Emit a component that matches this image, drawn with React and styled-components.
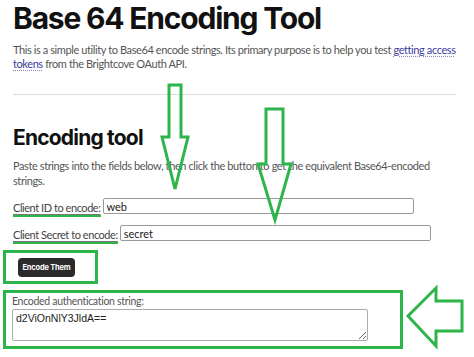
import React, { useState } from 'react';
import styled, { createGlobalStyle } from 'styled-components';

const GlobalStyle = createGlobalStyle`
	body {
		margin: 0;
		background: #fff;
		font-family: "Lato", "Liberation Sans", sans-serif;
	}
`;

const Page = styled.div`
	position: relative;
	width: 474px;
	height: 357px;
	overflow: hidden;
	padding: 0 18px 0 13px;
	box-sizing: border-box;
`;
const Title = styled.h1`
	margin: 0;
	padding-top: 1px;
	font-family: "Inter", "Liberation Sans", sans-serif;
	font-size: 30px;
	line-height: 34px;
	font-weight: 700;
	color: #111;
	letter-spacing: -1.2px;
`;
const Intro = styled.p`
	margin: 8px 0 0;
	font-size: 11px;
	line-height: 14px;
	letter-spacing: -0.4px;
	color: #555;
`;
const Link = styled.a`
	color: #3b3b9c;
	text-decoration: underline dotted #8888bb;
	text-underline-offset: 2px;
`;
const Rule = styled.hr`
	margin: 23px 0 0;
	border: none;
	border-top: 1px solid #ddd;
`;
const Heading = styled.h2`
	margin: 31px 0 0;
	font-family: "Inter", "Liberation Sans", sans-serif;
	font-size: 21px;
	line-height: 24px;
	font-weight: 700;
	color: #111;
	letter-spacing: -0.8px;
`;
const Hint = styled.p`
	margin: 8px 0 0;
	font-size: 11px;
	line-height: 15px;
	letter-spacing: -0.4px;
	color: #555;
`;
const Field = styled.div`
	display: flex;
	align-items: center;
	height: 16px;
	margin-top: ${p => p.$top}px;
`;
const Label = styled.label`
	font-size: 11px;
	line-height: 13px;
	letter-spacing: -0.45px;
	color: #444;
	text-decoration: underline;
	text-decoration-color: #777;
	text-underline-offset: 2px;
	border-bottom: 2px solid #2db54a;
	padding-bottom: 1px;
	margin-top: 5px;
`;
const TextInput = styled.input`
	width: 311px;
	height: 16px;
	box-sizing: border-box;
	margin-left: 2px;
	border: 1px solid #999;
	border-radius: 2px;
	padding: 0 3px;
	font: 11px "Lato", "Liberation Sans", sans-serif;
	color: #222;
`;
const ButtonBox = styled.div`
	margin: 9px 0 0 -10px;
	width: 95px;
	height: 34px;
	box-sizing: border-box;
	border: 3px solid #2db54a;
	padding: 5px 0 0 12px;
`;
const EncodeButton = styled.button`
	display: block;
	width: 57px;
	height: 19px;
	background: #2b2b2b;
	color: #fff;
	border: none;
	border-radius: 4px;
	font: 700 7.5px "Inter", "Liberation Sans", sans-serif;
	letter-spacing: -0.2px;
	padding: 0;
`;
const ResultBox = styled.div`
	margin: 6px 0 0 -10px;
	width: 400px;
	height: 59px;
	box-sizing: border-box;
	border: 3px solid #2db54a;
	padding: 2px 0 0 6px;
`;
const ResultLabel = styled.div`
	font-size: 10.5px;
	line-height: 12px;
	letter-spacing: -0.3px;
	color: #555;
`;
const ResultArea = styled.textarea`
	display: block;
	margin-top: 2px;
	width: 356px;
	height: 32px;
	box-sizing: border-box;
	border: 1px solid #aaa;
	border-radius: 2px;
	padding: 2px 3px;
	font: 10.5px "Liberation Sans", sans-serif;
	color: #222;
	resize: vertical;
`;
const Overlay = styled.svg`
	position: absolute;
	left: 0;
	top: 0;
	pointer-events: none;
`;

function App() {
	const [clientId, setClientId] = useState('web');
	const [secret, setSecret] = useState('secret');
	const [encoded, setEncoded] = useState('d2ViOnNlY3JldA==');

	const handleEncode = () => {
		setEncoded(btoa(clientId + ':' + secret));
	}

	return (
		<Page>
			<GlobalStyle />
			<Title>Base 64 Encoding Tool</Title>
			<Intro>
				This is a simple utility to Base64 encode strings. Its primary purpose is to help you test <Link href="#">getting access tokens</Link> from the Brightcove OAuth API.
			</Intro>
			<Rule />
			<Heading>Encoding tool</Heading>
			<Hint>Paste strings into the fields below, then click the button to get the equivalent Base64-encoded strings.</Hint>
			<Field $top={10}>
				<Label>Client ID to encode:</Label>
				<TextInput value={clientId} onChange={e => setClientId(e.target.value)} />
			</Field>
			<Field $top={11}>
				<Label>Client Secret to encode:</Label>
				<TextInput value={secret} onChange={e => setSecret(e.target.value)} />
			</Field>
			<ButtonBox>
				<EncodeButton onClick={handleEncode}>Encode Them</EncodeButton>
			</ButtonBox>
			<ResultBox>
				<ResultLabel>Encoded authentication string:</ResultLabel>
				<ResultArea value={encoded} onChange={e => setEncoded(e.target.value)} />
			</ResultBox>

			{/* annotation arrows drawn over the page */}
			<Overlay width="474" height="357" viewBox="0 0 474 357" fill="none" stroke="#2db54a" strokeWidth="3" strokeLinejoin="miter">
				<polygon points="169,85 181,85 181,137 188,137 175,189 162,137 169,137" />
				<polygon points="266,109 283,109 283,164 291,164 275,220 258,164 266,164" />
				<polygon points="462,301 462,331 436,331 436,346 408,316 436,288 436,301" />
			</Overlay>
		</Page>
	)
}

export default App;
